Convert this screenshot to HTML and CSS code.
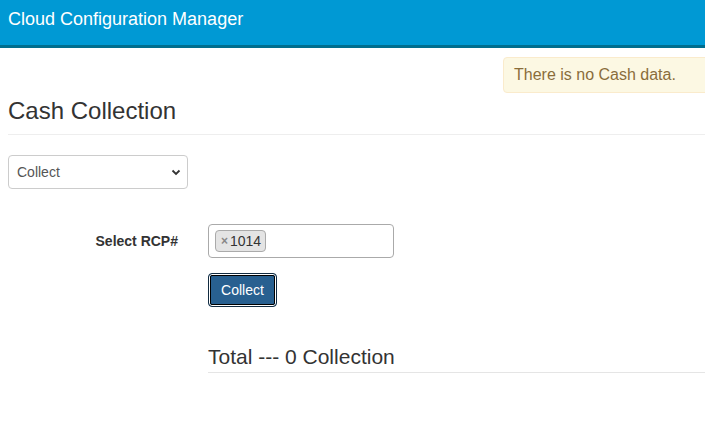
FILE: index.html
```html
<!DOCTYPE html>
<html>
<head>
<meta charset="utf-8">
<link rel="stylesheet" href="styles.css">
</head>
<body>
<header class="topbar"><span class="brand">Cloud Configuration Manager</span></header>
<main class="page">
  <div class="alert-row"><div class="alert">There is no Cash data.</div></div>
  <h2 class="title">Cash Collection</h2>
  <div class="select-wrap">
    <div class="select"><span>Collect</span>
      <svg class="chev" width="10" height="7" viewBox="0 0 10 7"><path d="M1.5 1.5 L5 5 L8.5 1.5" fill="none" stroke="#333" stroke-width="1.8"/></svg>
    </div>
  </div>
  <div class="form-row">
    <label class="label">Select RCP#</label>
    <div class="multi"><span class="tag"><span class="x">×</span>1014</span></div>
  </div>
  <div class="form-row btn-row">
    <span class="spacer"></span>
    <button class="btn">Collect</button>
  </div>
  <div class="form-row total-row">
    <span class="spacer"></span>
    <h3 class="total">Total --- 0 Collection</h3>
  </div>
</main>
</body>
</html>
```
FILE: styles.css
```css
* { box-sizing: border-box; }
html, body { margin: 0; padding: 0; }
body { font-family: "Liberation Sans", Arial, sans-serif; font-size: 14px; color: #333; background: #fff; width: 705px; height: 427px; overflow: hidden; }
.topbar { height: 48px; background: #0099d4; border-bottom: 3px solid #006e8e; padding: 8px 8px 0; }
.brand { color: #fff; font-size: 18px; line-height: 22px; }
.page { padding: 0 0 0 8px; }
.alert-row { display: flex; justify-content: flex-end; padding-top: 9px; margin-right: -4px; }
.alert { width: 206px; height: 36px; background: #fcf8e3; border: 1px solid #faebcc; border-radius: 4px; color: #8a6d3b; padding: 7px 10px; line-height: 20px; font-size: 16px; }
.title { font-size: 24px; font-weight: 400; margin: 4px 0 0; line-height: 28px; padding-bottom: 9px; border-bottom: 1px solid #eee; color: #333; }
.select-wrap { padding-top: 20px; }
.select { width: 180px; height: 34px; border: 1px solid #ccc; border-radius: 4px; display: flex; align-items: center; justify-content: space-between; padding: 0 6px 0 8px; color: #555; }
.form-row { display: flex; align-items: center; }
.label { width: 170px; text-align: right; font-weight: bold; font-size: 14px; }
.multi { margin-left: 30px; width: 186px; height: 34px; border: 1px solid #aaa; border-radius: 4px; padding: 5px 6px; }
.select-wrap + .form-row { margin-top: 35px; }
.tag { display: inline-flex; align-items: center; height: 22px; background: #e4e4e4; border: 1px solid #aaa; border-radius: 4px; padding: 0 4px 0 5px; color: #333; font-size: 14px; }
.x { color: #888; font-size: 12px; margin-right: 2px; font-weight: bold; }
.spacer { width: 200px; flex: none; }
.btn-row { margin-top: 15px; }
.btn { width: 69px; height: 34px; background: #286090; color: #fff; border: 1px solid #122b40; border-radius: 4px; font-family: inherit; font-size: 14px; box-shadow: inset 0 0 0 1px #fff, 0 0 0 1px #fff; outline: 1px solid #000; outline-offset: -3px; padding: 0; }
.total-row { margin-top: 38px; }
.total { flex: 1; font-size: 21px; font-weight: 400; margin: 0; line-height: 24px; padding-bottom: 3px; border-bottom: 1px solid #e5e5e5; color: #333; }
```
